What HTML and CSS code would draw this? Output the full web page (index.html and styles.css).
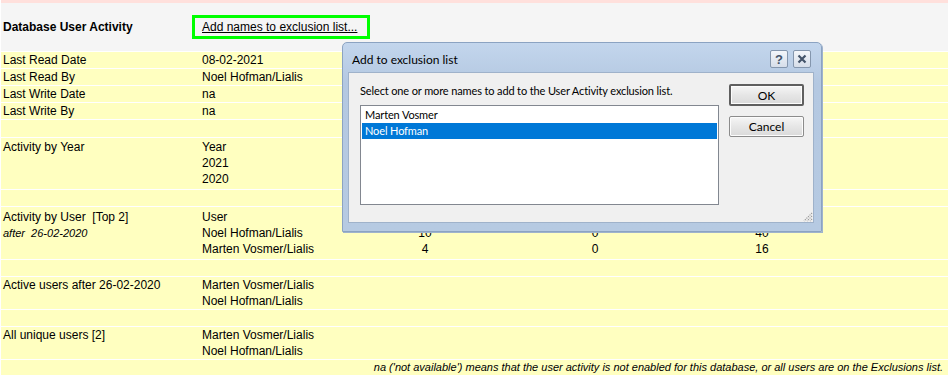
FILE: index.html
```html
<!DOCTYPE html>
<html lang="en">
<head>
    <meta charset="UTF-8">
    <title>Database User Activity</title>
    <link rel="stylesheet" href="styles.css">
</head>
<body>
    <div class="topline"></div>

    <div class="head">
        <div class="head-title">Database User Activity</div>
        <div class="head-action"><a href="#">Add names to exclusion list...</a></div>
    </div>

    <table class="activity">
        <tr><td class="lbl">Last Read Date</td><td>08-02-2021</td></tr>
        <tr><td class="lbl">Last Read By</td><td>Noel Hofman/Lialis</td></tr>
        <tr><td class="lbl">Last Write Date</td><td>na</td></tr>
        <tr><td class="lbl">Last Write By</td><td>na</td></tr>
        <tr class="blank tall"><td></td><td></td></tr>

        <tr class="multi">
            <td class="lbl lbl-sub">Activity by Year</td>
            <td class="subcell">
                <table class="sub">
                    <tr><td class="first">Year</td><td>Reads</td><td>Writes</td><td>Total</td></tr>
                    <tr><td class="first">2021</td><td>6</td><td>0</td><td>24</td></tr>
                    <tr><td class="first">2020</td><td>8</td><td>0</td><td>32</td></tr>
                </table>
            </td>
        </tr>
        <tr class="blank"><td></td><td></td></tr>

        <tr class="multi">
            <td class="lbl lbl-sub lower">Activity by User &nbsp;[Top 2]<br><span class="hint">after &nbsp;26-02-2020</span></td>
            <td class="subcell lower">
                <table class="sub">
                    <tr><td class="first">User</td><td>Reads</td><td>Writes</td><td>Total</td></tr>
                    <tr><td class="first">Noel Hofman/Lialis</td><td>10</td><td>0</td><td>40</td></tr>
                    <tr><td class="first">Marten Vosmer/Lialis</td><td>4</td><td>0</td><td>16</td></tr>
                </table>
            </td>
        </tr>
        <tr class="blank"><td></td><td></td></tr>

        <tr class="multi">
            <td class="lbl">Active users after 26-02-2020</td>
            <td>Marten Vosmer/Lialis<br>Noel Hofman/Lialis</td>
        </tr>
        <tr class="blank"><td></td><td></td></tr>

        <tr class="multi">
            <td class="lbl">All unique users [2]</td>
            <td>Marten Vosmer/Lialis<br>Noel Hofman/Lialis</td>
        </tr>
        <tr class="note">
            <td colspan="2">na ('not available') means that the user activity is not enabled for this database, or all users are on the Exclusions list.</td>
        </tr>
    </table>

    <!-- modal picker opened by the link above -->
    <div class="dialog">
        <div class="dlg-title">
            <span class="dlg-caption">Add to exclusion list</span>
            <div class="dlg-tools">
                <span class="tool tool-help">?</span>
                <span class="tool">
                    <svg width="10" height="10" viewBox="0 0 10 10"><path d="M1.5 1.5 L8.5 8.5 M8.5 1.5 L1.5 8.5" stroke="#44546a" stroke-width="2.2" fill="none"/></svg>
                </span>
            </div>
        </div>
        <div class="dlg-frame">
            <div class="dlg-body">
                <div class="dlg-main">
                    <p class="dlg-prompt">Select one or more names to add to the User Activity exclusion list.</p>
                    <ul class="dlg-list">
                        <li>Marten Vosmer</li>
                        <li class="selected">Noel Hofman</li>
                    </ul>
                </div>
                <div class="dlg-buttons">
                    <button class="btn btn-default">OK</button>
                    <button class="btn">Cancel</button>
                </div>
                <svg class="grip" width="11" height="11" viewBox="0 0 11 11">
                    <path d="M10 2 L2 10 M10 5 L5 10 M10 8 L8 10" stroke="#9a9a9a" stroke-width="1.2" stroke-dasharray="1.2 1" fill="none"/>
                </svg>
            </div>
        </div>
    </div>
</body>
</html>
```

FILE: styles.css
```css
body {
	font-family: "Liberation Sans", Arial, sans-serif;
	font-size: 12px;
	color: #000;
	margin: 0 1px;
	background-color: #fff;
}

.topline {
	height: 3px;
	background-color: #ffe0dc;
}

.head {
	display: flex;
	align-items: center;
	height: 48px;
	background-color: #f5f5f5;
}

.head-title {
	width: 189px;
	padding-left: 2px;
	font-weight: bold;
}

.head-action {
	border: 3px solid #0f0;
	padding: 1px 10px 1px 7px;
	line-height: 16px;
}

.head-action a {
	color: #000;
	text-decoration: underline;
}

/* activity table */

.activity {
	width: 100%;
	border-collapse: separate;
	border-spacing: 0;
}

.activity td {
	background-color: #ffffc0;
	border-top: 1px solid #fff;
	padding: 0 2px;
	line-height: 16px;
	height: 16px;
	vertical-align: top;
}

.activity .blank.tall td {
	height: 17px;
}

.activity td.lbl {
	width: 195px;
}

.activity .multi td {
	height: auto;
}

.activity td.lbl-sub {
	padding-top: 1px;
}

.activity td.subcell {
	padding: 1px 0 2px 0;
}

.activity td.lower {
	padding-top: 2px;
}

.hint {
	font-style: italic;
	font-size: 11px;
}

.sub {
	border-collapse: collapse;
}

.sub td {
	border: none;
	padding: 0;
	height: 16px;
	width: 170px;
	text-align: center;
}

.sub td:last-child {
	width: 164px;
}

.sub td.first {
	width: 138px;
	padding-left: 2px;
	text-align: left;
}

.activity .note td {
	height: 15px;
	line-height: 15px;
	text-align: right;
	padding-right: 5px;
	font-style: italic;
	font-size: 11px;
}

/* dialog */

.dialog {
	position: absolute;
	left: 342px;
	top: 42px;
	width: 480px;
	height: 190px;
	box-sizing: border-box;
	border: 1px solid #8ba3c2;
	border-radius: 5px 5px 0 0;
	background: linear-gradient(#c3d6ed, #b4c8e1 40px, #b6cae2);
	box-shadow: 1px 1px 0 #9fb3cd;
	font-family: Lato, "Liberation Sans", sans-serif;
}

.dlg-title {
	display: flex;
	justify-content: space-between;
	height: 29px;
	padding: 0 10px 0 9px;
}

.dlg-caption {
	padding-top: 9px;
	line-height: 16px;
	font-size: 12px;
	color: #000;
}

.dlg-tools {
	display: flex;
	gap: 5px;
	margin-top: 7px;
}

.tool {
	display: flex;
	align-items: center;
	justify-content: center;
	width: 18px;
	height: 18px;
	box-sizing: border-box;
	border: 1px solid #8496ad;
	border-radius: 2px;
	background: linear-gradient(#f3f6fa, #d6dee9);
}

.tool-help {
	font-family: "Liberation Sans", Arial, sans-serif;
	font-weight: bold;
	font-size: 13px;
	color: #44546a;
}

.dlg-frame {
	padding: 0 7px 8px 5px;
}

.dlg-body {
	position: relative;
	display: flex;
	gap: 10px;
	height: 151px;
	box-sizing: border-box;
	border: 1px solid #9fb2ca;
	padding: 0 9px 0 11px;
	background-color: #f0f0f0;
	font-size: 11px;
	letter-spacing: -0.13px;
}

.dlg-main {
	width: 359px;
}

.dlg-prompt {
	margin: 11px 0 7px;
	line-height: 14px;
}

.dlg-list {
	list-style: none;
	margin: 0;
	padding: 1px;
	height: 100px;
	box-sizing: border-box;
	border: 1px solid #828790;
	background-color: #fff;
}

.dlg-list li {
	line-height: 16px;
	padding-left: 3px;
}

.dlg-list li.selected {
	background-color: #0078d7;
	color: #fff;
}

.dlg-buttons {
	display: flex;
	flex-direction: column;
	gap: 10px;
	margin-top: 11px;
	width: 75px;
}

.btn {
	height: 21px;
	padding: 0;
	border: 1px solid #8c8c8c;
	border-radius: 2px;
	background: linear-gradient(#f6f6f6, #e6e6e6 50%, #dadada);
	box-shadow: inset 0 0 0 1px #fcfcfc;
	font-family: Lato, "Liberation Sans", sans-serif;
	font-size: 12px;
	letter-spacing: 0;
	color: #000;
}

.btn-default {
	height: 22px;
	border: 2px solid #5f5f5f;
}

.grip {
	position: absolute;
	right: 0;
	bottom: 0;
}
```
